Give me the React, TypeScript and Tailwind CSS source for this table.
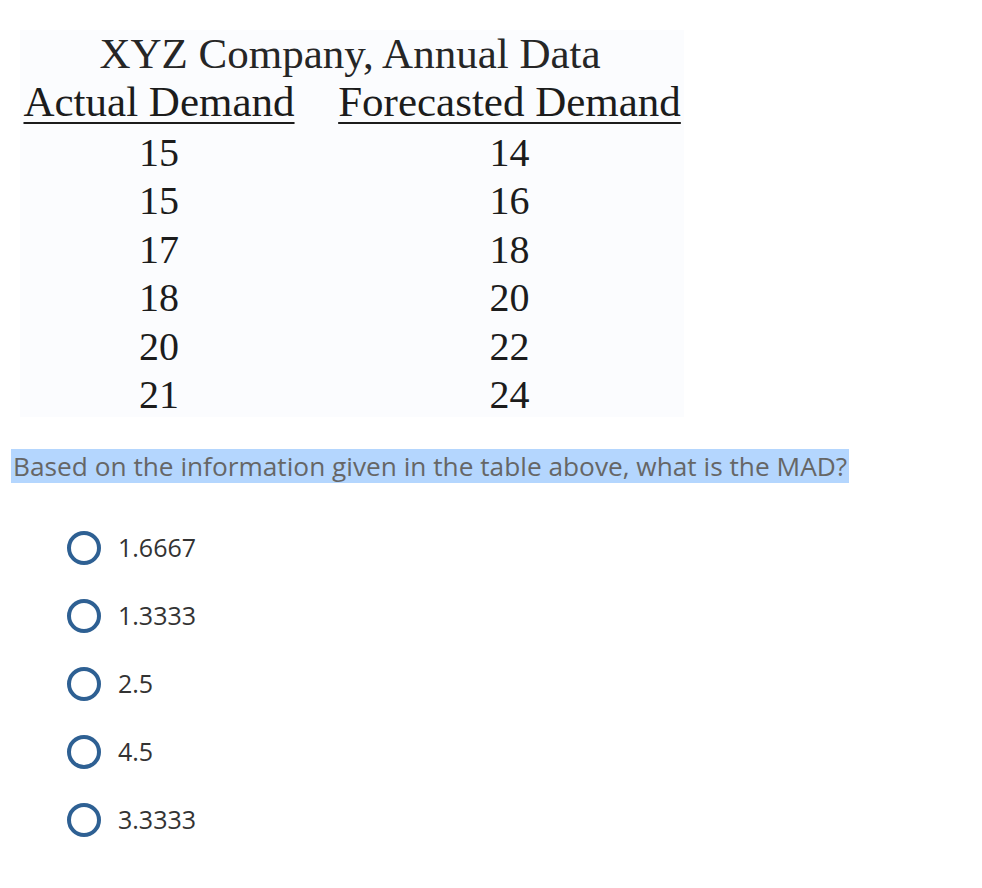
const actual = [15, 15, 17, 18, 20, 21];
const forecast = [14, 16, 18, 20, 22, 24];
const choices = ["1.6667", "1.3333", "2.5", "4.5", "3.3333"];

const serif = "font-['Liberation_Serif','Times_New_Roman',serif] text-[#1c1c1c]";
const sans = "font-['Open_Sans',Lato,sans-serif]";

// 表の列（見出し + 数値）
const Column = ({ title, values, width }: { title: string; values: number[]; width: string }) => {
    return (
        <div className={`flex flex-col items-center ${width}`}>
            <div className="text-[43px] leading-[48px] underline decoration-[2px] underline-offset-[6px] whitespace-nowrap">
                {title}
            </div>
            <div className="mt-[3px] flex flex-col items-center">
                {values.map((v, i) => (
                    <div key={i} className="text-[40px] leading-[48.4px]">
                        {v}
                    </div>
                ))}
            </div>
        </div>
    );
};

const DataTable = () => {
    return (
        <div className={`ml-[20px] w-[664px] h-[387px] bg-[#fbfcfe] ${serif}`}>
            <div className="text-center text-[43px] leading-[48px] text-[#262626] pr-[4px]">
                XYZ Company, Annual Data
            </div>
            <div className="flex pl-[5px] gap-[47px]">
                <Column title="Actual Demand" values={actual} width="w-[268px]" />
                <Column title="Forecasted Demand" values={forecast} width="w-[339px]" />
            </div>
        </div>
    );
};

const Choice = ({ label }: { label: string }) => {
    return (
        <label className="flex items-center h-[68px] pl-[67px] cursor-pointer">
            <span className="w-[34px] h-[34px] rounded-full border-[4px] border-[#2e6093] bg-white shrink-0" />
            <span className={`ml-[17px] text-[25px] text-[#333333] ${sans}`}>{label}</span>
        </label>
    );
};

export default function App() {
    return (
        <div className="w-full min-h-[888px] bg-white pt-[30px]">
            <DataTable />

            <div className="mt-[32px] pl-[11px]">
                <span className={`inline-block h-[34px] leading-[34px] px-[2px] bg-[#b4d6fe] text-[26.25px] text-[#666666] whitespace-nowrap ${sans}`}>
                    Based on the information given in the table above, what is the MAD?
                </span>
            </div>

            <div className="mt-[31px] flex flex-col">
                {choices.map((c) => (
                    <Choice key={c} label={c} />
                ))}
            </div>
        </div>
    );
}
